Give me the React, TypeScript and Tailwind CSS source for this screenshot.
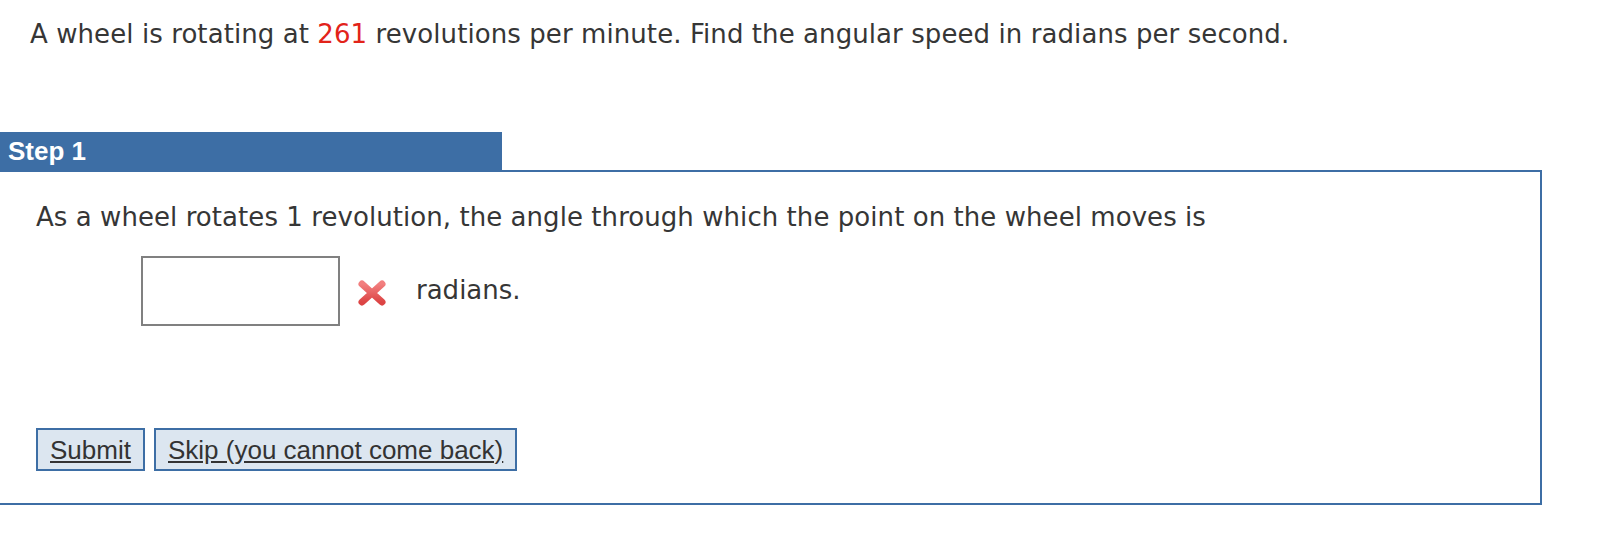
import React from 'react'

function CrossIcon() {
  return (
    <svg width="30" height="28" viewBox="0 0 30 28" className="shrink-0">
      <defs>
        <linearGradient id="xg" x1="0" y1="0" x2="0" y2="1">
          <stop offset="0" stopColor="#f27f7f" />
          <stop offset="1" stopColor="#dc4444" />
        </linearGradient>
      </defs>
      <path d="M5 5 L25 23 M25 5 L5 23" stroke="url(#xg)" strokeWidth="7" strokeLinecap="round" fill="none" />
    </svg>
  )
}

export default function App() {
  return (
    <div className="w-[1616px] h-[548px] bg-white overflow-hidden text-[#363636]">
      <p className="pl-[30px] pt-[18px] text-[26px] leading-[32px] tracking-[0.08px] font-['DejaVu_Sans',Verdana,sans-serif]">
        A wheel is rotating at <span className="text-[#e2231a]">261</span> revolutions per minute. Find the angular
        speed in radians per second.
      </p>

      <div className="mt-[82px]">
        <div className="w-[502px] h-[38px] bg-[#3d6ea5] pl-[8px] pt-[4px] text-white font-bold text-[26px] leading-[30px] font-['Liberation_Sans',Arial,sans-serif]">
          Step 1
        </div>
        <div className="ml-[-2px] w-[1544px] h-[335px] border-2 border-[#3d6ea5]">
          <p className="pl-[36px] pt-[29px] text-[26px] leading-[32px] tracking-[0.06px] font-['DejaVu_Sans',Verdana,sans-serif]">
            As a wheel rotates 1 revolution, the angle through which the point on the wheel moves is
          </p>
          <div className="flex items-start pl-[141px] mt-[23px]">
            <input
              type="text"
              className="w-[199px] h-[70px] border-2 border-[#808080] bg-white outline-none"
            />
            <div className="ml-[17px] mt-[23px]">
              <CrossIcon />
            </div>
            <span className="ml-[29px] mt-[18px] text-[26px] leading-[32px] font-['DejaVu_Sans',Verdana,sans-serif]">
              radians.
            </span>
          </div>
          <div className="flex gap-[9px] pl-[36px] mt-[102px] font-['Liberation_Sans',Arial,sans-serif] text-[26px] text-[#333]">
            <button className="w-[109px] h-[43px] pl-[12px] pr-0 text-left whitespace-nowrap border-2 border-[#3d6ea5] bg-[#dce6f0] underline leading-[30px]">
              Submit
            </button>
            <button className="w-[363px] h-[43px] pl-[12px] pr-0 text-left whitespace-nowrap border-2 border-[#3d6ea5] bg-[#dce6f0] underline leading-[30px]">
              Skip (you cannot come back)
            </button>
          </div>
        </div>
      </div>
    </div>
  )
}
